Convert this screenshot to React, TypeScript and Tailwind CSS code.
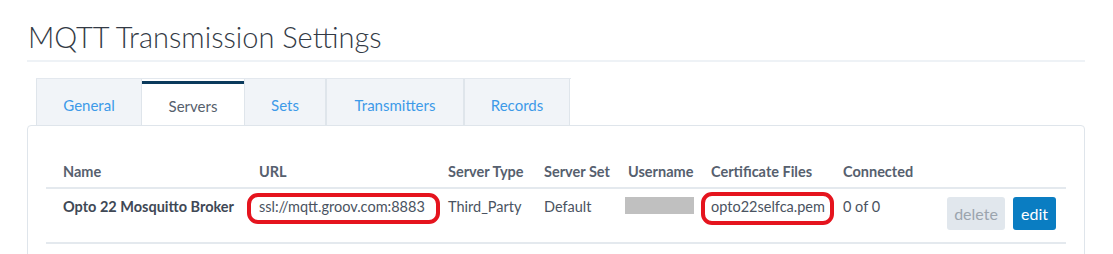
const tabs = ["General", "Servers", "Sets", "Transmitters", "Records"];
const tabWidths = ["w-[106px]", "w-[102px]", "w-[82px]", "w-[138px]", "w-[106px]"];

const headers = [
  "Name",
  "URL",
  "Server Type",
  "Server Set",
  "Username",
  "Certificate Files",
  "Connected",
  "",
];

function Highlight({ className }: { className: string }) {
  return (
    <span
      className={`pointer-events-none absolute rounded-[11px] border-[4px] border-[#e5141e] ${className}`}
    />
  );
}

export default function App() {
  return (
    <div className="h-[254px] w-[1113px] overflow-hidden bg-white font-['Lato','Liberation_Sans',sans-serif] text-[#4a5361]">
      <div className="mx-[27px] w-[1058px] pt-[19px]">
        <h1 className="border-b-2 border-[#eef2f6] pb-[5px] pl-[1px] text-[29px] leading-[36px] font-light text-[#333a45]">
          MQTT Transmission Settings
        </h1>
      </div>

      <div className="ml-[36px] mt-[16px] flex w-[535px] border-t border-[#e3e8ee]">
        {tabs.map((t, i) =>
          t === "Servers" ? (
            <div
              key={t}
              className={`${tabWidths[i]} mt-[2px] flex h-[44px] items-center justify-center border-t-[3px] border-[#0b3a5c] bg-white pt-[4px] text-[15px] text-[#56606c]`}
            >
              {t}
            </div>
          ) : (
            <div
              key={t}
              className={`${tabWidths[i]} flex h-[46px] items-center justify-center border-x border-[#dfe5eb] bg-[#f1f4f8] pt-[6px] text-[15px] text-[#3d9ae8]`}
            >
              {t}
            </div>
          ),
        )}
      </div>

      <div className="ml-[27px] w-[1058px] rounded-[4px] border border-[#dfe5eb] px-[18px] pt-[20px] pb-[20px]">
        <div className="grid grid-cols-[196px_189px_96px_84px_83px_132px_104px_1fr] border-b-2 border-[#e4e9ee] pl-[17px] pb-[5px] pt-[16px]">
          {headers.map((h, i) => (
            <div key={i} className="text-[14.5px] leading-[20px] font-bold text-[#56606e]">
              {h}
            </div>
          ))}
        </div>
        <div className="grid grid-cols-[196px_189px_96px_84px_83px_132px_104px_1fr] border-b-2 border-[#e4e9ee] pl-[17px] pt-[8px] pb-[12px] text-[14.5px] leading-[20px]">
          <div className="font-bold text-[#404855]">Opto 22 Mosquitto Broker</div>
          <div className="relative">
            <Highlight className="-left-[12px] -top-[4px] h-[31px] w-[193px]" />
            ssl://mqtt.groov.com:8883
          </div>
          <div>Third_Party</div>
          <div>Default</div>
          <div>
            <div className="-ml-[3px] h-[17px] w-[69px] bg-[#c0c0c0]" />
          </div>
          <div className="relative">
            <Highlight className="-left-[10px] -top-[5px] h-[33px] w-[133px]" />
            opto22selfca.pem
          </div>
          <div>0 of 0</div>
          <div className="flex gap-[8px]">
            <button className="h-[33px] w-[58px] rounded-[3px] bg-[#e1e7ed] text-[16px] text-[#9ba4ad]">
              delete
            </button>
            <button className="h-[33px] w-[43px] rounded-[3px] bg-[#0a7dc2] text-[16px] text-white">
              edit
            </button>
          </div>
        </div>
      </div>
    </div>
  );
}
